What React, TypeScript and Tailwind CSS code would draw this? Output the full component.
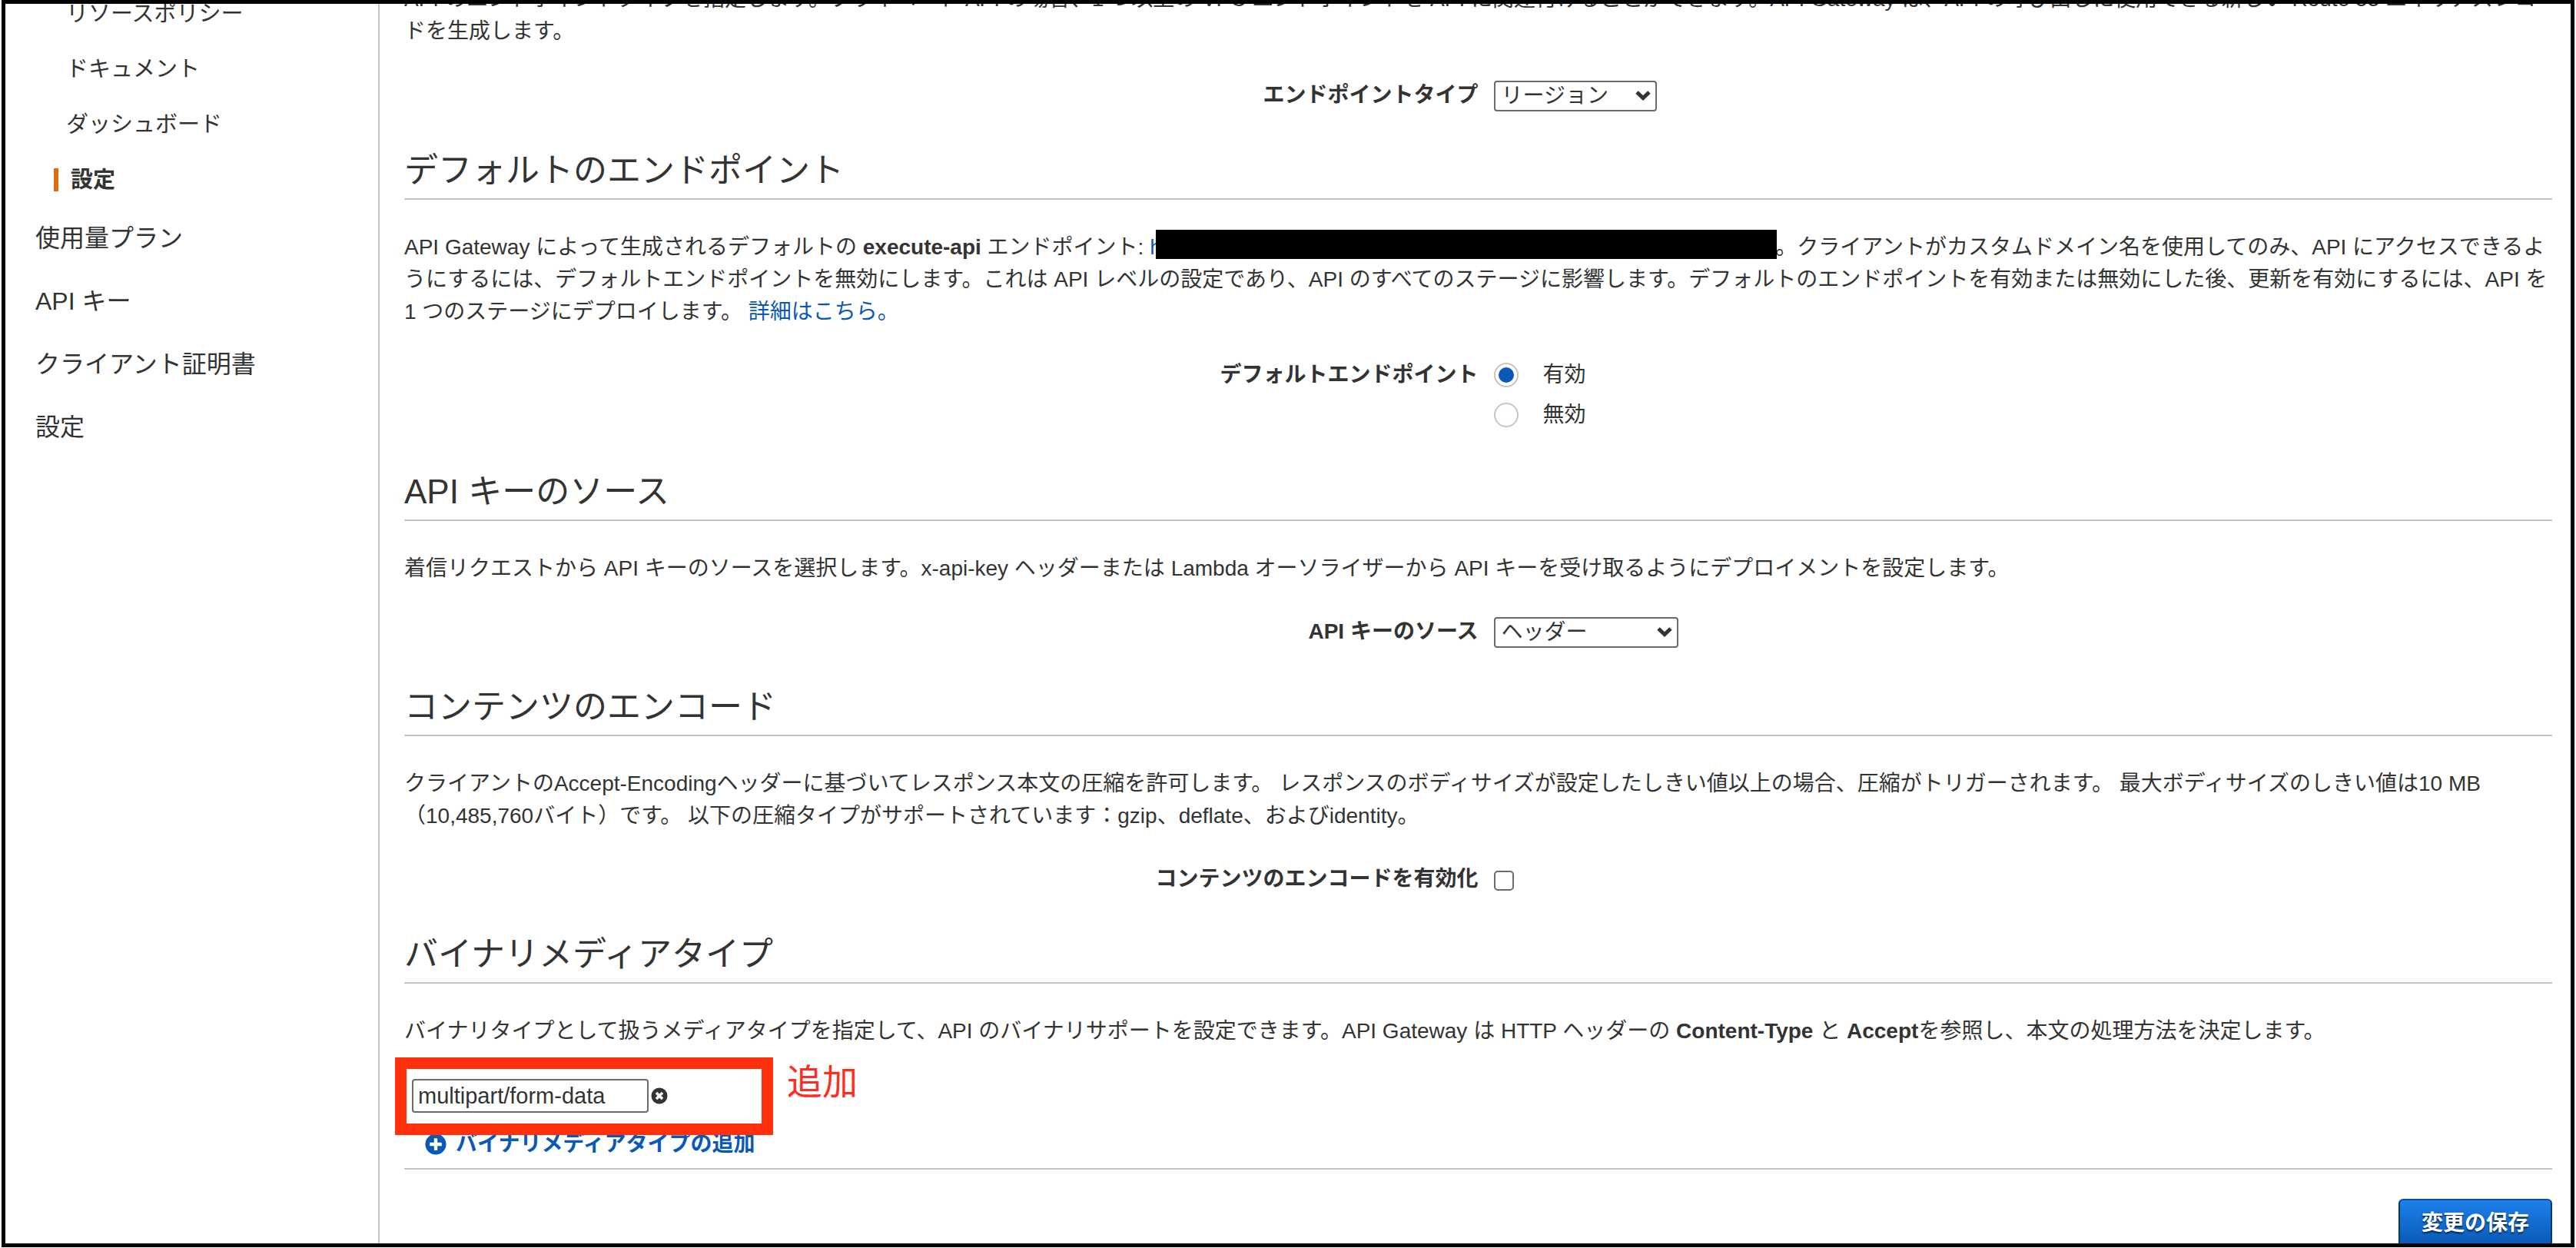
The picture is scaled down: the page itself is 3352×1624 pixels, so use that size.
import { useState, type ReactNode } from "react";
import { FaPlusCircle } from "react-icons/fa";

type NavItem = {
  label: string;
  active?: boolean;
};

const apiItems: NavItem[] = [
  { label: "リソースポリシー" },
  { label: "ドキュメント" },
  { label: "ダッシュボード" },
  { label: "設定", active: true }
];

const globalItems: NavItem[] = [
  { label: "使用量プラン" },
  { label: "API キー" },
  { label: "クライアント証明書" },
  { label: "設定" }
];

function Section({ title, children }: { title: string; children: ReactNode }) {
  return (
    <section className="mt-12">
      <h2 className="border-b-2 border-[#c5c5c5] pb-[6px] text-[44px] leading-[60px]">{title}</h2>
      <div className="pt-[41px]">{children}</div>
    </section>
  );
}

function Select({ id, options, className }: { id: string; options: string[]; className: string }) {
  return (
    <div className={`relative h-10 ${className}`}>
      <select
        id={id}
        className="h-10 w-full appearance-none rounded-[4px] border-2 border-[#6b6b6b] bg-white pr-10 pl-2 text-[28px] leading-9 outline-none"
      >
        {options.map((option) => (
          <option key={option}>{option}</option>
        ))}
      </select>
      <svg viewBox="0 0 20 14" className="pointer-events-none absolute top-[14px] right-2 h-[14px] w-5" fill="none" stroke="#333" strokeWidth="5">
        <path d="M2 2 L10 9.5 L18 2" />
      </svg>
    </div>
  );
}

export default function App() {
  const [endpoint, setEndpoint] = useState("enabled");
  const [encoding, setEncoding] = useState(false);
  const [mediaType, setMediaType] = useState("multipart/form-data");

  return (
    <div className="h-screen bg-white px-[2px] pb-px font-['Liberation_Sans','Noto_Sans_CJK_JP',sans-serif] text-[28px] leading-[42px] text-[#333]">
      <div className="flex h-full overflow-hidden border-[5px] border-black">
        <nav className="w-[487px] shrink-0 border-r-2 border-[#c5c5c5]">
          <ul className="-mt-2 text-[29px]">
            {apiItems.map((item) => (
              <li key={item.label} className="mb-[30px] flex items-center">
                {item.active ? (
                  <a href="#" className="ml-[63px] flex items-center font-bold">
                    <span className="mr-4 h-[30px] w-[6px] bg-[#dd6b10]" />
                    {item.label}
                  </a>
                ) : (
                  <a href="#" className="ml-[79px]">{item.label}</a>
                )}
              </li>
            ))}
          </ul>
          <ul className="mt-[34px] ml-[39px] text-[32px]">
            {globalItems.map((item) => (
              <li key={item.label} className="mb-10">
                <a href="#">{item.label}</a>
              </li>
            ))}
          </ul>
        </nav>

        <main className="min-w-0 flex-1 pr-6 pl-8">
          <p className="-mt-[27px] -mr-2">
            API のエンドポイントタイプを指定します。プライベート API の場合、1 つ以上の VPC エンドポイントを API に関連付けることができます。API Gateway は、API の呼び出しに使用できる新しい Route 53 エイリアスレコードを生成します。
          </p>
          <div className="mt-[42px] grid grid-cols-2 items-center">
            <label htmlFor="endpoint-type" className="text-right leading-10 font-bold">エンドポイントタイプ</label>
            <div className="pl-5">
              <Select id="endpoint-type" options={["リージョン", "エッジ最適化", "プライベート"]} className="w-[212px]" />
            </div>
          </div>

          <Section title="デフォルトのエンドポイント">
            <p>
              API Gateway によって生成されるデフォルトの <b>execute-api</b> エンドポイント:{" "}
              <a href="#" className="relative inline-block w-[814px] text-[#0a58b8]">
                h
                <span className="absolute -top-0.5 left-2 h-[38px] w-[808px] bg-black" />
              </a>
              。クライアントがカスタムドメイン名を使用してのみ、API にアクセスできるようにするには、デフォルトエンドポイントを無効にします。これは API レベルの設定であり、API のすべてのステージに影響します。デフォルトのエンドポイントを有効または無効にした後、更新を有効にするには、API を 1 つのステージにデプロイします。{" "}
              <a href="#" className="text-[#0a58b8]">詳細はこちら。</a>
            </p>
            <div role="radiogroup" aria-labelledby="default-endpoint" className="mt-[41px] grid grid-cols-2 items-start">
              <span id="default-endpoint" className="text-right leading-10 font-bold">デフォルトエンドポイント</span>
              <div className="flex flex-col items-start gap-3 pb-0.5 pl-5">
                {[
                  { value: "enabled", label: "有効" },
                  { value: "disabled", label: "無効" }
                ].map((option) => (
                  <label key={option.value} className="flex items-center gap-8 leading-10">
                    <input
                      type="radio"
                      name="default-endpoint"
                      checked={endpoint === option.value}
                      onChange={() => setEndpoint(option.value)}
                      className="size-8 appearance-none rounded-full border-2 border-[#c5c5c5] bg-white bg-clip-content p-1 checked:bg-[#0a58b8]"
                    />
                    {option.label}
                  </label>
                ))}
              </div>
            </div>
          </Section>

          <Section title="API キーのソース">
            <p>
              着信リクエストから API キーのソースを選択します。x-api-key ヘッダーまたは Lambda オーソライザーから API キーを受け取るようにデプロイメントを設定します。
            </p>
            <div className="mt-[41px] grid grid-cols-2 items-center">
              <label htmlFor="key-source" className="text-right leading-10 font-bold">API キーのソース</label>
              <div className="pl-5">
                <Select id="key-source" options={["ヘッダー", "オーソライザー"]} className="w-60" />
              </div>
            </div>
          </Section>

          <Section title="コンテンツのエンコード">
            <p>
              クライアントのAccept-Encodingヘッダーに基づいてレスポンス本文の圧縮を許可します。 レスポンスのボディサイズが設定したしきい値以上の場合、圧縮がトリガーされます。 最大ボディサイズのしきい値は10 MB（10,485,760バイト）です。 以下の圧縮タイプがサポートされています：gzip、deflate、およびidentity。
            </p>
            <div className="mt-[41px] grid grid-cols-2 items-center">
              <label htmlFor="encoding" className="text-right leading-10 font-bold">コンテンツのエンコードを有効化</label>
              <div className="flex pt-1 pl-5">
                <input
                  id="encoding"
                  type="checkbox"
                  checked={encoding}
                  onChange={(event) => setEncoding(event.target.checked)}
                  className="size-[26px] appearance-none rounded-[5px] border-2 border-[#6b6b6b] bg-white checked:bg-[#0a58b8]"
                />
              </div>
            </div>
          </Section>

          <Section title="バイナリメディアタイプ">
            <p>
              バイナリタイプとして扱うメディアタイプを指定して、API のバイナリサポートを設定できます。API Gateway は HTTP ヘッダーの <b>Content-Type</b> と <b>Accept</b>を参照し、本文の処理方法を決定します。
            </p>
            <div className="relative mt-[41px] flex items-center gap-[3px] pl-[10px]">
              <input
                type="text"
                aria-label="バイナリメディアタイプ"
                value={mediaType}
                onChange={(event) => setMediaType(event.target.value)}
                className="h-11 w-[308px] rounded-[4px] border-2 border-[#6b6b6b] bg-white px-[6px] text-[29px] outline-none"
              />
              <button type="button" onClick={() => setMediaType("")}>
                <svg viewBox="0 0 22 22" className="size-[22px]">
                  <circle cx="11" cy="11" r="10.5" fill="#333" />
                  <path d="M7 7 L15 15 M15 7 L7 15" stroke="#fff" strokeWidth="3.6" />
                </svg>
              </button>
              <div className="pointer-events-none absolute -top-7 -left-3 h-[101px] w-[492px] border-[15px] border-[#ff300b]" />
              <span className="absolute -top-5 left-[498px] text-[46px] leading-[48px] text-[#ff2d1f]">追加</span>
            </div>
            <button type="button" className="mt-[21px] ml-[27px] flex h-10 items-center gap-3 font-bold text-[#0a58b8]">
              <FaPlusCircle className="size-7" />
              バイナリメディアタイプの追加
            </button>
            <div className="mt-[11px] flex justify-end border-t-2 border-[#c5c5c5] pt-[38px]">
              <button
                type="button"
                className="h-16 rounded-[6px] border-2 border-[#06376f] border-t-[#0a4fa5] bg-linear-to-b from-[#1c80ea] to-[#0a58b4] px-7 font-bold text-white text-shadow-[0_2px_2px_#00264d]"
              >
                変更の保存
              </button>
            </div>
          </Section>
        </main>
      </div>
    </div>
  );
}
